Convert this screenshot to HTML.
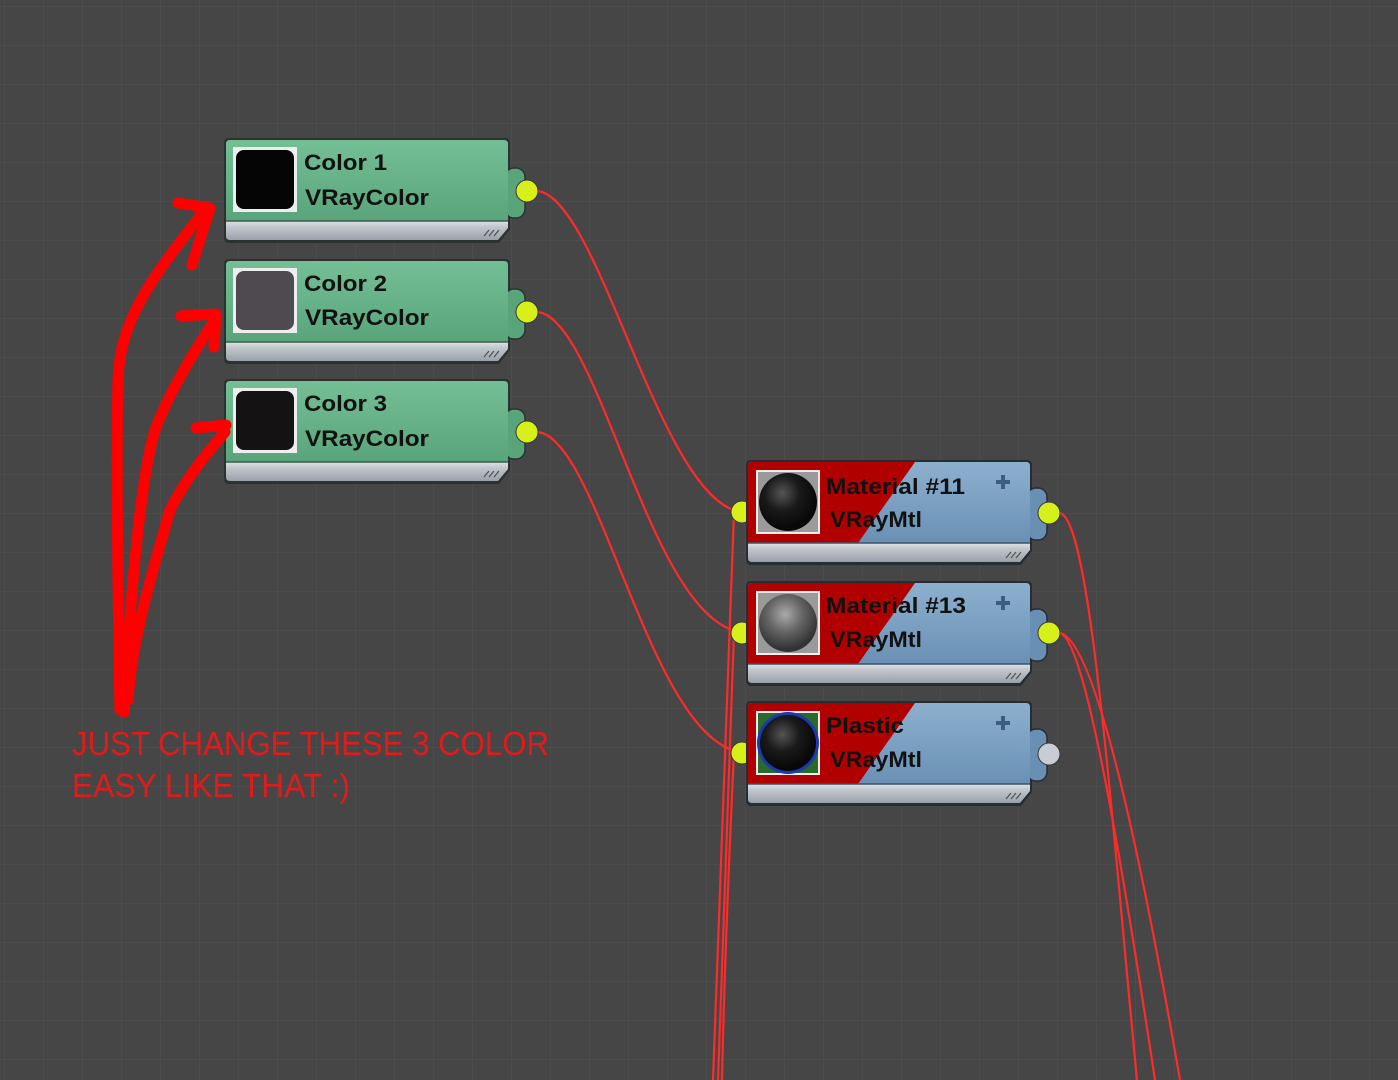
<!DOCTYPE html>
<html><head><meta charset="utf-8"><style>
html,body{margin:0;padding:0;background:#464646;}
svg{display:block}
.t{font-family:"Liberation Sans",sans-serif;font-weight:bold;font-size:22px;fill:#111;}
</style></head><body>
<svg width="1398" height="1080" viewBox="0 0 1398 1080" xmlns="http://www.w3.org/2000/svg">
<defs>
<pattern id="grid" x="4" y="6" width="39" height="39" patternUnits="userSpaceOnUse">
<path d="M0 0H39M0 0V39" stroke="#525252" stroke-width="1" fill="none"/>
</pattern>
<linearGradient id="gh" x1="0" y1="0" x2="0" y2="1"><stop offset="0" stop-color="#74bf95"/><stop offset="1" stop-color="#5aa47b"/></linearGradient>
<linearGradient id="bh" x1="0" y1="0" x2="0" y2="1"><stop offset="0" stop-color="#8eb0cf"/><stop offset="1" stop-color="#6990b4"/></linearGradient>
<linearGradient id="ft" x1="0" y1="0" x2="0" y2="1"><stop offset="0" stop-color="#dfe3e7"/><stop offset="0.3" stop-color="#c2c7cd"/><stop offset="1" stop-color="#9aa1a8"/></linearGradient>
<radialGradient id="sph" cx="0.4" cy="0.35" r="0.6"><stop offset="0" stop-color="#555"/><stop offset="0.5" stop-color="#1a1a1a"/><stop offset="1" stop-color="#080808"/></radialGradient>
<radialGradient id="sph2" cx="0.45" cy="0.35" r="0.6"><stop offset="0" stop-color="#aaa"/><stop offset="0.5" stop-color="#666"/><stop offset="1" stop-color="#333"/></radialGradient>
<g id="gnode">
<path d="M-2 3Q-2 -2 3 -2H279Q284 -2 284 3V89L273 103H3Q-2 103 -2 97Z" fill="#2b3330"/>
<rect x="279" y="28" width="20" height="50" rx="9" fill="#5aa47b" stroke="#2b3330" stroke-width="1.5"/>
<path d="M0 4Q0 0 4 0H278Q282 0 282 4V81H0Z" fill="url(#gh)"/>
<path d="M0 81H282V88L272 100H4Q0 100 0 96Z" fill="url(#ft)"/>
<line x1="0" y1="81" x2="282" y2="81" stroke="#3d5a4a" stroke-width="1.5"/>
<path d="M258 96l5-6M263 96l5-6M268 96l5-6" stroke="#555" stroke-width="1.3"/>
<circle cx="301" cy="51" r="11" fill="#d8f01a" stroke="#3a3a3a" stroke-width="1"/>
</g>
<g id="bnode">
<circle cx="-6" cy="50" r="11" fill="#d8f01a" stroke="#3a3a3a"/>
<path d="M-2 3Q-2 -2 3 -2H279Q284 -2 284 3V89L273 103H3Q-2 103 -2 97Z" fill="#262d33"/>
<rect x="279" y="26" width="20" height="52" rx="9" fill="#6990b4" stroke="#262d33" stroke-width="1.5"/>
<path d="M0 4Q0 0 4 0H278Q282 0 282 4V81H0Z" fill="url(#bh)"/>
<path d="M0 4Q0 0 4 0H167L110 81H0Z" fill="#b00000"/>
<path d="M0 81H282V88L272 100H4Q0 100 0 96Z" fill="url(#ft)"/>
<line x1="0" y1="81" x2="282" y2="81" stroke="#3c5266" stroke-width="1.5"/>
<path d="M258 96l5-6M263 96l5-6M268 96l5-6" stroke="#555" stroke-width="1.3"/>
<path d="M255 13v14M248 20h14" stroke="#3d5f7f" stroke-width="4"/>
<rect x="8" y="8" width="64" height="64" fill="#eee"/>
</g>
</defs>
<rect width="1398" height="1080" fill="#464646"/>
<rect width="1398" height="1080" fill="url(#grid)"/>

<g fill="none" stroke="#ff2a2a" stroke-width="2.2">
<path d="M538 191C600 200 660 500 741 512"/>
<path d="M538 312C600 320 650 620 741 632"/>
<path d="M538 432C600 440 650 740 741 752"/>
<path d="M734 512C728 700 718 900 713 1080"/>
<path d="M734 632C728 800 722 950 718 1080"/>
<path d="M734 752C728 880 724 980 722 1080"/>
<path d="M1060 513C1090 520 1110 800 1137 1080"/>
<path d="M1060 633C1085 640 1120 850 1155 1080"/>
<path d="M1060 633C1095 640 1140 850 1180 1080"/>
</g>

<use href="#gnode" x="226" y="140"/>
<use href="#gnode" x="226" y="261"/>
<use href="#gnode" x="226" y="381"/>
<g>
<rect x="233" y="147" width="64" height="65" fill="#eee"/><rect x="236" y="150" width="58" height="59" rx="8" fill="#050505"/>
<rect x="233" y="268" width="64" height="65" fill="#eee"/><rect x="236" y="271" width="58" height="59" rx="8" fill="#4e4a50"/>
<rect x="233" y="388" width="64" height="65" fill="#eee"/><rect x="236" y="391" width="58" height="59" rx="8" fill="#141212"/>
</g>
<text class="t" x="304" y="170" textLength="83" lengthAdjust="spacingAndGlyphs">Color 1</text><text class="t" x="305" y="205" textLength="124" lengthAdjust="spacingAndGlyphs">VRayColor</text>
<text class="t" x="304" y="291" textLength="83" lengthAdjust="spacingAndGlyphs">Color 2</text><text class="t" x="305" y="325" textLength="124" lengthAdjust="spacingAndGlyphs">VRayColor</text>
<text class="t" x="304" y="411" textLength="83" lengthAdjust="spacingAndGlyphs">Color 3</text><text class="t" x="305" y="446" textLength="124" lengthAdjust="spacingAndGlyphs">VRayColor</text>

<use href="#bnode" x="748" y="462"/>
<use href="#bnode" x="748" y="583"/>
<use href="#bnode" x="748" y="703"/>
<circle cx="1049" cy="513" r="11" fill="#d8f01a" stroke="#3a3a3a"/>
<circle cx="1049" cy="633" r="11" fill="#d8f01a" stroke="#3a3a3a"/>
<circle cx="1049" cy="754" r="11" fill="#c8ccd4" stroke="#3a3a3a"/>
<rect x="758" y="472" width="60" height="60" fill="#9a9a9a"/><circle cx="788" cy="502" r="29" fill="url(#sph)"/>
<rect x="758" y="593" width="60" height="60" fill="#9a9a9a"/><circle cx="788" cy="623" r="29" fill="url(#sph2)"/>
<rect x="758" y="713" width="60" height="60" fill="#2a6a2a"/><circle cx="788" cy="743" r="31" fill="#1a3ab0"/><circle cx="788" cy="743" r="28" fill="url(#sph)"/>
<text class="t" x="826" y="494" textLength="139" lengthAdjust="spacingAndGlyphs">Material #11</text><text class="t" x="830" y="527" textLength="92" lengthAdjust="spacingAndGlyphs">VRayMtl</text>
<text class="t" x="826" y="613" textLength="140" lengthAdjust="spacingAndGlyphs">Material #13</text><text class="t" x="830" y="647" textLength="92" lengthAdjust="spacingAndGlyphs">VRayMtl</text>
<text class="t" x="826" y="733" textLength="78" lengthAdjust="spacingAndGlyphs">Plastic</text><text class="t" x="830" y="767" textLength="92" lengthAdjust="spacingAndGlyphs">VRayMtl</text>

<g fill="none" stroke="#ff0000" stroke-width="11" stroke-linecap="round" stroke-linejoin="round">
<path d="M120 710C118 600 116 460 118 380C120 320 150 280 205 210"/>
<path d="M178 203L210 208L192 265"/>
<path d="M124 712C130 600 140 480 155 430C170 390 195 350 215 320"/>
<path d="M181 316L216 314L214 347"/>
<path d="M128 700C132 640 150 580 170 510C185 480 205 455 225 432"/>
<path d="M196 428L226 425"/>
</g>
<g font-family="Liberation Sans,sans-serif" font-size="33" fill="#e21a1a">
<text x="72" y="755" textLength="477" lengthAdjust="spacingAndGlyphs">JUST CHANGE THESE 3 COLOR</text>
<text x="72" y="797" textLength="278" lengthAdjust="spacingAndGlyphs">EASY LIKE THAT :)</text>
</g>
</svg>
</body></html>
